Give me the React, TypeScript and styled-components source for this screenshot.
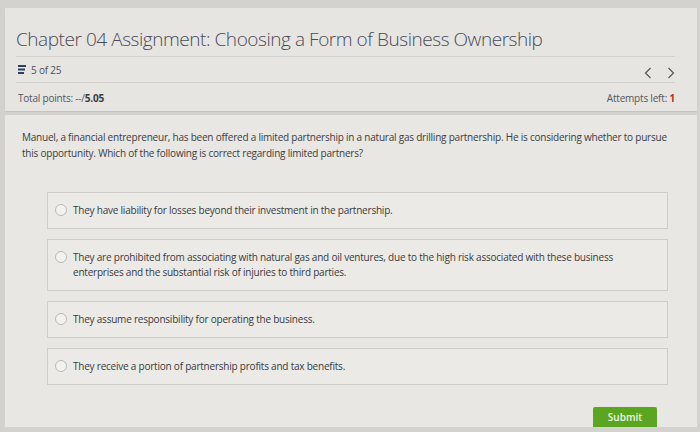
import React from 'react';
import styled, {createGlobalStyle} from 'styled-components';

const GlobalStyle = createGlobalStyle`
  html, body {
    margin: 0;
    padding: 0;
    background: #d3d2ce;
    font-family: "Open Sans", "Liberation Sans", sans-serif;
    color: #3e3e44;
  }
`

const Frame = styled.div`
  width: 700px;
  height: 432px;
  box-sizing: border-box;
  padding: 8px 3px 0 5px;
  display: flex;
  flex-direction: column;
  gap: 4px;
  overflow: hidden;
`
const HeaderCard = styled.div`
  background: #e6e5e1;
  padding: 0 22px 0 11px;
  display: flex;
  flex-direction: column;
  box-shadow: 0 1px 1px #c4c3bf;
`
const Title = styled.h1`
  margin: 0;
  padding: 19px 0 5px;
  font-size: 19px;
  font-weight: 300;
  letter-spacing: -0.45px;
  line-height: 24px;
  color: #4a4a58;
  border-bottom: 1px solid #d2d1cd;
`
const NavRow = styled.div`
  height: 25px;
  display: flex;
  align-items: center;
  justify-content: space-between;
  border-bottom: 1px solid #d2d1cd;
`
const Counter = styled.div`
  display: flex;
  align-items: center;
  gap: 3px;
  font-size: 10px;
  letter-spacing: -0.2px;
  color: #505058;
  padding-left: 2px;
`
const Arrows = styled.div`
  display: flex;
  gap: 15px;
  padding-top: 7px;
`
const PointsRow = styled.div`
  height: 26px;
  display: flex;
  align-items: center;
  justify-content: space-between;
  font-size: 10px;
  letter-spacing: -0.2px;
  color: #55555c;
  padding: 2px 0 0 2px;
`
const Strong = styled.b<{$red?: boolean}>`
  font-weight: 700;
  color: ${p => p.$red ? '#c0282c' : '#3a3a40'};
`
const QuestionCard = styled.div`
  height: 312px;
  flex: none;
  overflow: hidden;
  box-sizing: border-box;
  background: #e8e7e3;
  padding: 14px 29px 0 17px;
  display: flex;
  flex-direction: column;
`
const Prompt = styled.p`
  margin: 0;
  font-size: 10px;
  letter-spacing: -0.22px;
  line-height: 16px;
  color: #3c3c42;
`
const Options = styled.div`
  margin: 31px 0 0 25px;
  display: flex;
  flex-direction: column;
  gap: 10px;
`
const Option = styled.label`
  display: flex;
  align-items: flex-start;
  gap: 6px;
  background: #ebeae6;
  border: 1px solid #cfcdc9;
  padding: 10px 36px 10px 7px;
  font-size: 10px;
  letter-spacing: -0.22px;
  line-height: 15px;
  color: #3a3a40;
`
const Radio = styled.span`
  flex: none;
  width: 12px;
  height: 12px;
  margin-top: 1px;
  border-radius: 50%;
  border: 1px solid #b9b9b7;
  background: #f2f2f0;
  box-sizing: border-box;
`
const Footer = styled.div`
  display: flex;
  justify-content: flex-end;
  padding: 22px 11px 0 0;
`
const Submit = styled.button`
  width: 64px;
  height: 22px;
  flex: none;
  border: 0;
  border-radius: 2px;
  background: #5aa620;
  color: #eef6e6;
  font-family: "Open Sans", "Liberation Sans", sans-serif;
  font-size: 10px;
  font-weight: 600;
  padding: 0 0 2px;
`

const ListIcon = () => (
  <svg width="10" height="11" viewBox="0 0 10 11">
    <rect x="0" y="1" width="8" height="2" fill="#2f3d62"/>
    <rect x="0" y="4.5" width="7" height="2" fill="#2f3d62"/>
    <rect x="0" y="8" width="6" height="2" fill="#2f3d62"/>
  </svg>
)

const Chevron = ({dir}: {dir: 'left' | 'right'}) => (
  <svg width="8" height="12" viewBox="0 0 8 12">
    <path d={dir === 'left' ? 'M6.5 1 L1.5 6 L6.5 11' : 'M1.5 1 L6.5 6 L1.5 11'}
          fill="none" stroke="#55555e" strokeWidth="1.2"/>
  </svg>
)

const answers = [
  'They have liability for losses beyond their investment in the partnership.',
  'They are prohibited from associating with natural gas and oil ventures, due to the high risk associated with these business enterprises and the substantial risk of injuries to third parties.',
  'They assume responsibility for operating the business.',
  'They receive a portion of partnership profits and tax benefits.',
]

function App() {
  return (
    <>
      <GlobalStyle/>
      <Frame>
        <HeaderCard>
          <Title>Chapter 04 Assignment: Choosing a Form of Business Ownership</Title>
          <NavRow>
            <Counter><ListIcon/>5 of 25</Counter>
            <Arrows>
              <Chevron dir="left"/>
              <Chevron dir="right"/>
            </Arrows>
          </NavRow>
          <PointsRow>
            <span>Total points: --/<Strong>5.05</Strong></span>
            <span>Attempts left: <Strong $red>1</Strong></span>
          </PointsRow>
        </HeaderCard>
        <QuestionCard>
          <Prompt>
            Manuel, a financial entrepreneur, has been offered a limited partnership in a natural gas drilling partnership. He is considering whether to pursue this opportunity. Which of the following is correct regarding limited partners?
          </Prompt>
          <Options>
            {answers.map(a =>
              <Option key={a}>
                <Radio/>
                <span>{a}</span>
              </Option>
            )}
          </Options>
          <Footer>
            <Submit>Submit</Submit>
          </Footer>
        </QuestionCard>
      </Frame>
    </>
  )
}

export default App
